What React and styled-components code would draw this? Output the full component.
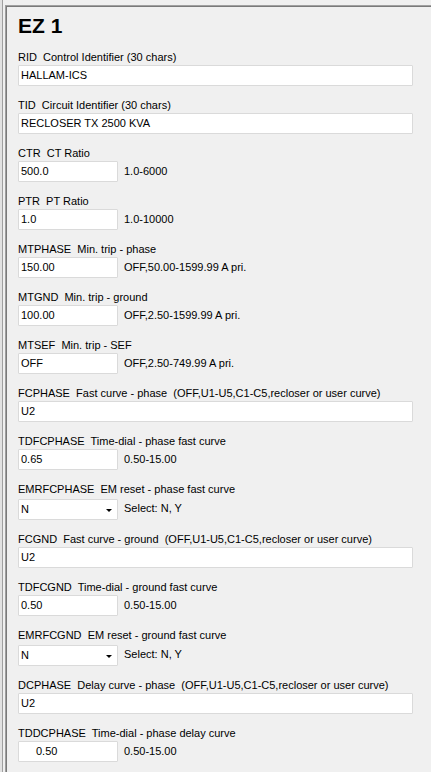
import React from 'react';
import styled, { createGlobalStyle } from 'styled-components';

/* Settings form - EZ 1 group, relay-style parameter editor */

const GlobalStyle = createGlobalStyle`
    html, body {
        margin: 0;
        padding: 0;
        background-color: #f0f0f0;
        font-family: "Liberation Sans", Arial, sans-serif;
        color: #000;
        overflow: hidden;
    }
`;

const Page = styled.div`
    display: flex;
    min-height: 772px;
`;

const Gutter = styled.div`
    width: 5px;
    flex: none;
    background: linear-gradient(to right, #e2e2e2 0 2px, #a0a0a0 2px 3px, #f0f0f0 3px);
`;

const Panel = styled.div`
    flex: 1;
    margin-top: 5px;
    border-top: 1px solid #a0a0a0;
    border-left: 1px solid #a0a0a0;
    box-shadow: inset 1px 1px 0 #7a7a7a;
    padding: 8px 18px 0 12px;
    display: flex;
    flex-direction: column;
    gap: 13px;
`;

const Title = styled.h1`
    margin: 0;
    font-size: 21px;
    line-height: 24px;
    font-weight: bold;
    padding-left: 0;
`;

const Field = styled.div`
    display: flex;
    flex-direction: column;
`;

const Label = styled.div`
    font-size: 11px;
    line-height: 13px;
    white-space: pre;
    margin-bottom: ${({ $select }) => ($select ? '3px' : '1px')};
`;

const Row = styled.div`
    display: flex;
    align-items: center;
    gap: 6px;
`;

const Input = styled.div`
    box-sizing: border-box;
    width: ${({ $wide }) => ($wide ? '100%' : '100px')};
    height: 21px;
    background: #fff;
    border: 1px solid #dadada;
    border-radius: 1px;
    font-size: 11px;
    line-height: 19px;
    padding-left: ${({ $indent }) => ($indent ? '17px' : '2px')};
    white-space: nowrap;
`;

const Select = styled(Input)`
    position: relative;
`;

const Caret = styled.span`
    position: absolute;
    right: 5px;
    top: 9px;
    width: 0;
    height: 0;
    border-left: 3px solid transparent;
    border-right: 3px solid transparent;
    border-top: 3px solid #000;
`;

const Hint = styled.span`
    font-size: 11px;
    line-height: 13px;
    white-space: nowrap;
    margin-top: ${({ $up }) => ($up ? '-2px' : '0')};
`;

const fields = [
    { code: 'RID', label: 'Control Identifier (30 chars)', value: 'HALLAM-ICS', wide: true },
    { code: 'TID', label: 'Circuit Identifier (30 chars)', value: 'RECLOSER TX 2500 KVA', wide: true },
    { code: 'CTR', label: 'CT Ratio', value: '500.0', hint: '1.0-6000' },
    { code: 'PTR', label: 'PT Ratio', value: '1.0', hint: '1.0-10000' },
    { code: 'MTPHASE', label: 'Min. trip - phase', value: '150.00', hint: 'OFF,50.00-1599.99 A pri.' },
    { code: 'MTGND', label: 'Min. trip - ground', value: '100.00', hint: 'OFF,2.50-1599.99 A pri.' },
    { code: 'MTSEF', label: 'Min. trip - SEF', value: 'OFF', hint: 'OFF,2.50-749.99 A pri.' },
    { code: 'FCPHASE', label: 'Fast curve - phase  (OFF,U1-U5,C1-C5,recloser or user curve)', value: 'U2', wide: true },
    { code: 'TDFCPHASE', label: 'Time-dial - phase fast curve', value: '0.65', hint: '0.50-15.00' },
    { code: 'EMRFCPHASE', label: 'EM reset - phase fast curve', value: 'N', hint: 'Select: N, Y', select: true },
    { code: 'FCGND', label: 'Fast curve - ground  (OFF,U1-U5,C1-C5,recloser or user curve)', value: 'U2', wide: true },
    { code: 'TDFCGND', label: 'Time-dial - ground fast curve', value: '0.50', hint: '0.50-15.00' },
    { code: 'EMRFCGND', label: 'EM reset - ground fast curve', value: 'N', hint: 'Select: N, Y', select: true },
    { code: 'DCPHASE', label: 'Delay curve - phase  (OFF,U1-U5,C1-C5,recloser or user curve)', value: 'U2', wide: true },
    { code: 'TDDCPHASE', label: 'Time-dial - phase delay curve', value: '0.50', hint: '0.50-15.00', indent: true },
];

const SettingField = ({ field }) => {
    const box = field.select ? (
        <Select>
            {field.value}
            <Caret />
        </Select>
    ) : (
        <Input $wide={field.wide} $indent={field.indent}>{field.value}</Input>
    );

    return (
        <Field>
            <Label $select={field.select}>{`${field.code}  ${field.label}`}</Label>
            {field.wide ? box : (
                <Row>
                    {box}
                    <Hint $up={field.select}>{field.hint}</Hint>
                </Row>
            )}
        </Field>
    );
};

const App = () => {
    return (
        <>
            <GlobalStyle />
            <Page>
                <Gutter />
                <Panel>
                    <Title>EZ 1</Title>
                    {fields.map((f) => (
                        <SettingField key={f.code} field={f} />
                    ))}
                </Panel>
            </Page>
        </>
    );
};

export default App;
